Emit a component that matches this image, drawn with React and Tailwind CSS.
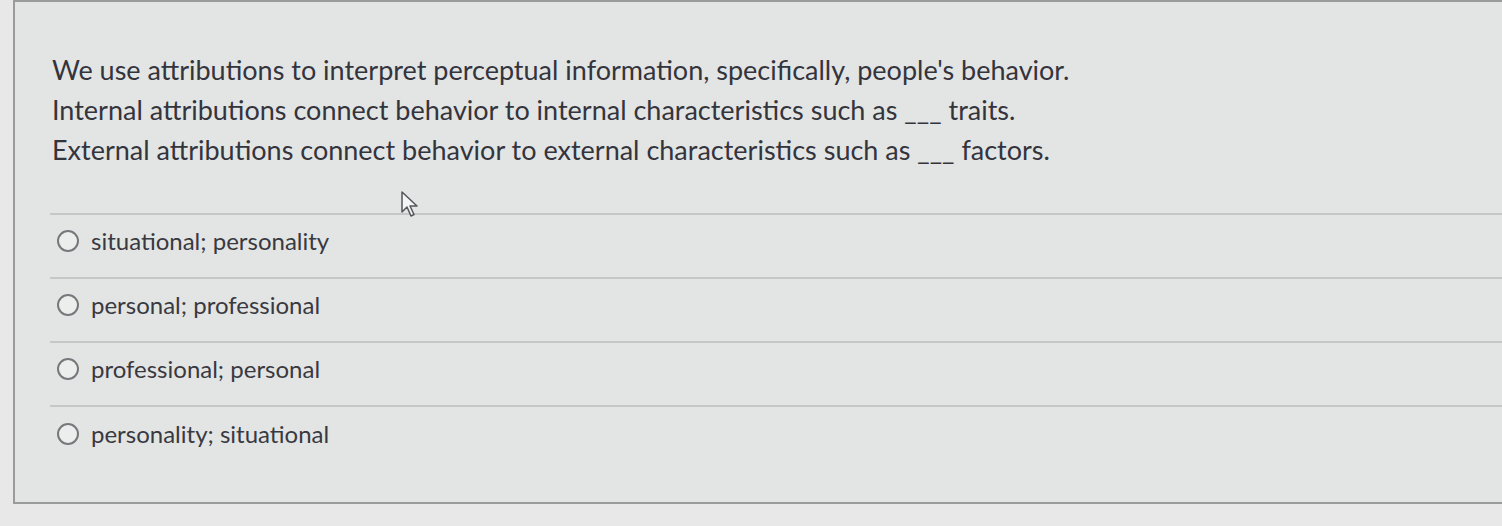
import React from "react";

const options = [
  "situational; personality",
  "personal; professional",
  "professional; personal",
  "personality; situational",
];

const App = () => {
  return (
    <div
      className="w-[1502px] h-[526px] bg-[#e7e8e7] overflow-hidden relative"
      style={{ fontFamily: "Lato, 'Open Sans', sans-serif" }}
    >
      <div className="ml-[13px] h-[504px] border-t-2 border-l-2 border-b-2 border-[#9a9c9c] bg-[#e3e5e4]">
        {/* Question text */}
        <div className="pl-[37px] pt-[48px] text-[27px] leading-[40px] text-[#34343d]">
          <p>We use attributions to interpret perceptual information, specifically, people's behavior.</p>
          <p>Internal attributions connect behavior to internal characteristics such as ___ traits.</p>
          <p>External attributions connect behavior to external characteristics such as ___ factors.</p>
        </div>

        {/* Answers */}
        <div className="ml-[35px] mt-[43px] border-t-2 border-[#c6c8c8]">
          {options.map((opt, i) => (
            <div
              key={opt}
              className={`h-[64px] flex items-center pl-[7px] pb-[10px] ${
                i < options.length - 1 ? "border-b-2 border-[#c6c8c8]" : ""
              }`}
            >
              <span className="w-[22px] h-[22px] rounded-full border-2 border-[#77787b] bg-[#eceeed] shrink-0" />
              <span className="ml-[12px] text-[24px] text-[#393941]">{opt}</span>
            </div>
          ))}
        </div>
      </div>

      {/* Mouse pointer */}
      <svg
        className="absolute left-[400px] top-[190px]"
        width="22"
        height="30"
        viewBox="0 0 22 30"
      >
        <path
          d="M2 2 L2 22 L7 17 L11 26 L14 24.5 L10 16 L17 16 Z"
          fill="#f4f4f4"
          stroke="#55565a"
          strokeWidth="1.5"
          strokeLinejoin="round"
        />
      </svg>
    </div>
  );
};

export default App;
